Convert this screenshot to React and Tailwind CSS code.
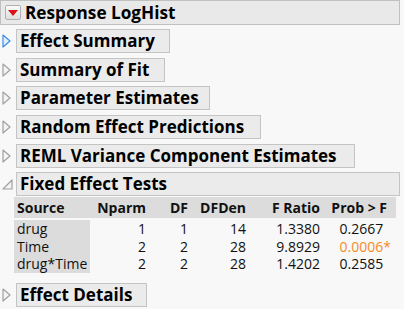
const font = { fontFamily: '"Open Sans", "Noto Sans", sans-serif' };

const Closed = ({ active }) => (
  <svg width="9" height="14" viewBox="0 0 9 14" className="shrink-0">
    <path
      d="M1 1 L8 7 L1 13 Z"
      fill={active ? "#dff0ff" : "#f4f4f4"}
      stroke={active ? "#3a8ee6" : "#a0a0a0"}
      strokeWidth="1.2"
      strokeLinejoin="round"
    />
  </svg>
);

const Open = () => (
  <svg width="11" height="11" viewBox="0 0 11 11" className="shrink-0">
    <path d="M1 10 L10 1 L10 10 Z" fill="#f4f4f4" stroke="#a0a0a0" strokeWidth="1.2" strokeLinejoin="round" />
  </svg>
);

const Outline = ({ title, active, open, width }) => (
  <div className="flex items-center h-[24px]">
    <div className="w-[16px] flex items-center justify-start pl-[2px]">
      {open ? <Open /> : <Closed active={active} />}
    </div>
    <div
      className={`h-[24px] flex items-center pl-[3px] bg-[#ebebeb] border border-[#c4c4c4] text-[17px] leading-[20px] font-bold text-black whitespace-nowrap ${width}`}
    >
      {title}
    </div>
  </div>
);

const rows = [
  ["drug", "1", "1", "14", "1.3380", "0.2667", false],
  ["Time", "2", "2", "28", "9.8929", "0.0006", true],
  ["drug*Time", "2", "2", "28", "1.4202", "0.2585", false],
];

const cols = "grid grid-cols-[76px_56px_42px_58px_74px_71px]";

export default function App() {
  return (
    <div className="w-[404px] h-[309px] bg-[#f8f8f8] overflow-hidden" style={font}>
      {/* header */}
      <div className="w-[400px] h-[25px] flex items-center bg-[#e9e9e9] border border-[#c0c0c0]">
        <div className="ml-[4px] w-[16px] h-[15px] flex items-center justify-center border border-[#b0b0b0] rounded-[2px] bg-gradient-to-b from-[#fafafa] to-[#dedede]">
          <svg width="10" height="6" viewBox="0 0 10 6">
            <path d="M0 0 L10 0 L5 6 Z" fill="#d9111b" />
          </svg>
        </div>
        <span className="ml-[4px] text-[17.2px] leading-[20px] font-bold text-black">Response LogHist</span>
      </div>

      <div className="flex flex-col gap-[4.7px] pt-[4px]">
        <Outline title="Effect Summary" active width="w-[154px]" />
        <Outline title="Summary of Fit" width="w-[149px]" />
        <Outline title="Parameter Estimates" width="w-[194px]" />
        <Outline title="Random Effect Predictions" width="w-[245px]" />
        <Outline title="REML Variance Component Estimates" width="w-[339px]" />
        <div>
          <Outline title="Fixed Effect Tests" open width="w-[384px]" />
          <div className="ml-[14px] mt-[1px] text-[14px] text-[#111]">
            <div className={`${cols} h-[21px] items-center bg-[#dcdcdc] w-[382px] font-bold leading-[18px]`}>
              <div className="pl-[3px]">Source</div>
              <div className="text-right">Nparm</div>
              <div className="text-right">DF</div>
              <div className="text-right">DFDen</div>
              <div className="text-right">F Ratio</div>
              <div className="text-right pr-[4px]">Prob &gt; F</div>
            </div>
            <div className="mt-[2px]">
              {rows.map((r) => (
                <div key={r[0]} className={`${cols} h-[17.5px] items-center leading-[17.5px]`}>
                  <div className="pl-[3px] bg-[#dcdcdc] h-[17.5px]">{r[0]}</div>
                  <div className="text-right">{r[1]}</div>
                  <div className="text-right">{r[2]}</div>
                  <div className="text-right">{r[3]}</div>
                  <div className="text-right">{r[4]}</div>
                  <div className={`text-right ${r[6] ? "text-[#f28c28]" : ""}`}>
                    {r[5]}
                    <span className={r[6] ? "" : "invisible"}>*</span>
                  </div>
                </div>
              ))}
            </div>
          </div>
        </div>
        <div className="mt-[5px]">
          <Outline title="Effect Details" width="w-[131px]" />
        </div>
      </div>
    </div>
  );
}
